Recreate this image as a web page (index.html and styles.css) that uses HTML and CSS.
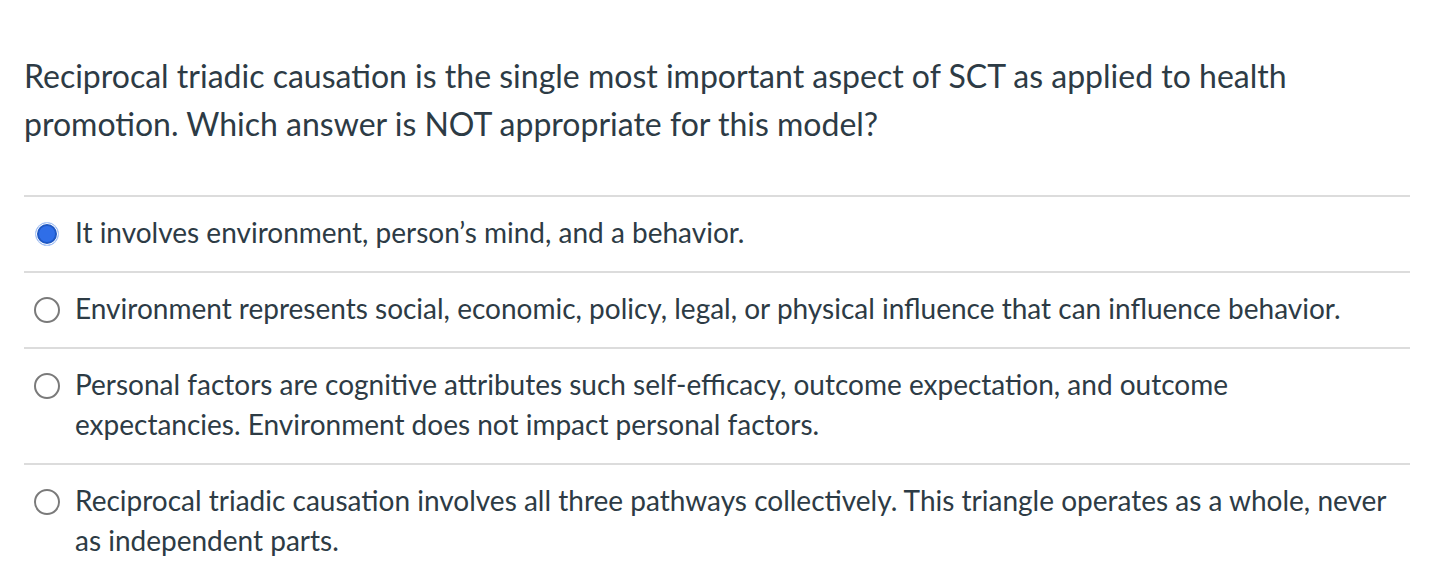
FILE: index.html
```html
<!DOCTYPE html>
<html lang="en">
<head>
<meta charset="utf-8">
<title>Question</title>
<link rel="stylesheet" href="styles.css">
</head>
<body>
<div class="quiz">
  <div class="question">Reciprocal triadic causation is the single most important aspect of SCT as applied to health promotion. Which answer is NOT appropriate for this model?</div>
  <div class="answers">
    <label class="answer">
      <span class="radio checked"></span>
      <span class="text">It involves environment, person’s mind, and a behavior.</span>
    </label>
    <label class="answer">
      <span class="radio"></span>
      <span class="text">Environment represents social, economic, policy, legal, or physical influence that can influence behavior.</span>
    </label>
    <label class="answer">
      <span class="radio"></span>
      <span class="text">Personal factors are cognitive attributes such self-efficacy, outcome expectation, and outcome expectancies. Environment does not impact personal factors.</span>
    </label>
    <label class="answer">
      <span class="radio"></span>
      <span class="text">Reciprocal triadic causation involves all three pathways collectively. This triangle operates as a whole, never as independent parts.</span>
    </label>
  </div>
</div>
</body>
</html>
```
FILE: styles.css
```css
html, body {
  margin: 0;
  padding: 0;
  background: #ffffff;
}
body {
  font-family: Lato, "Noto Sans", sans-serif;
  color: #2d3b45;
}
.quiz {
  padding: 52px 30px 0 24px;
  width: 1386px;
}
.question {
  font-size: 32px;
  line-height: 48px;
}
.answers {
  margin-top: 47px;
}
.answer {
  display: flex;
  align-items: flex-start;
  border-top: 2px solid #dcdcdc;
  padding: 15px 15px 19px 10px;
  font-size: 28px;
  line-height: 40px;
}
.radio {
  flex: none;
  width: 26px;
  height: 26px;
  box-sizing: border-box;
  border: 2px solid #7a7a7a;
  border-radius: 50%;
  margin: 9px 15px 0 0;
  background: #fff;
}
.radio.checked {
  width: 24px;
  height: 24px;
  margin: 10px 16px 0 1px;
  background: #2f6ee8;
  border: 1px solid #b8d0f8;
  box-shadow: inset 0 0 0 1px #ffffff, inset 0 0 0 3px #1f58c4;
}
.text {
  flex: 1;
}
```
